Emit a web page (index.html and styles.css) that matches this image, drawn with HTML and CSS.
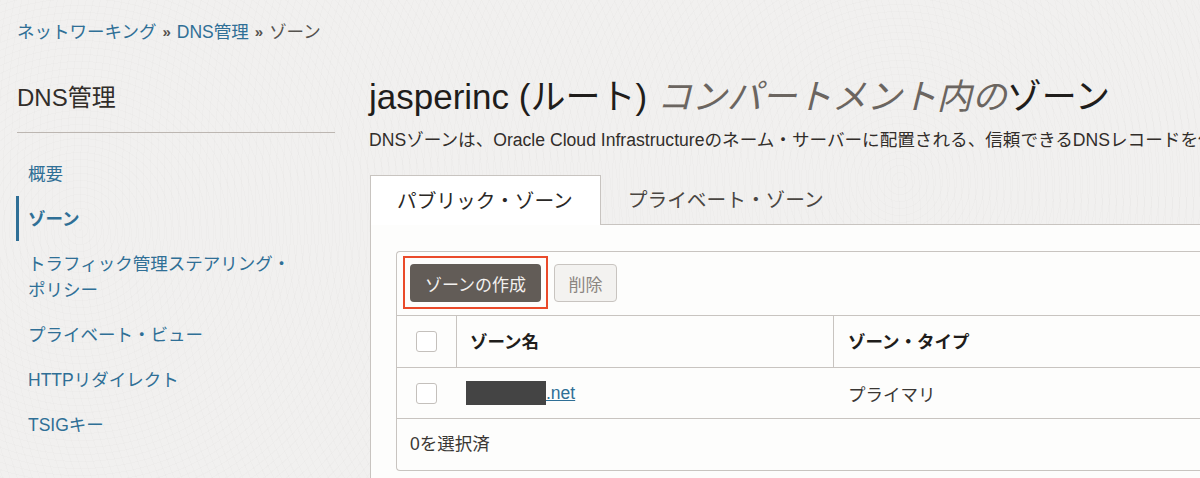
FILE: index.html
```html
<!DOCTYPE html>
<html lang="ja">
<head>
<meta charset="utf-8">
<title>ゾーン</title>
<link rel="stylesheet" href="styles.css">
</head>
<body>
<nav class="crumbs">
  <a href="#">ネットワーキング</a><span class="sep">»</span><a href="#">DNS管理</a><span class="sep">»</span><span>ゾーン</span>
</nav>
<div class="layout">
  <aside class="side">
    <h2 class="side-title">DNS管理</h2>
    <ul class="menu">
      <li class="item"><a href="#">概要</a></li>
      <li class="item active"><a href="#">ゾーン</a></li>
      <li class="item"><a href="#">トラフィック管理ステアリング・ポリシー</a></li>
      <li class="item"><a href="#">プライベート・ビュー</a></li>
      <li class="item"><a href="#">HTTPリダイレクト</a></li>
      <li class="item"><a href="#">TSIGキー</a></li>
    </ul>
  </aside>
  <main class="main">
    <h1 class="title">jasperinc (ルート) <em>コンパートメント内の</em>ゾーン</h1>
    <p class="desc">DNSゾーンは、Oracle Cloud Infrastructureのネーム・サーバーに配置される、信頼できるDNSレコードを保持します。</p>
    <div class="tabs">
      <div class="tab current">パブリック・ゾーン</div>
      <div class="tab">プライベート・ゾーン</div>
      <div class="tab-rest"></div>
    </div>
    <section class="panel">
      <div class="box">
        <div class="toolbar">
          <div class="highlight"><button class="btn primary">ゾーンの作成</button></div>
          <button class="btn plain">削除</button>
        </div>
        <div class="row head">
          <div class="cell check"><span class="box-check"></span></div>
          <div class="cell name">ゾーン名</div>
          <div class="cell type">ゾーン・タイプ</div>
        </div>
        <div class="row body-row">
          <div class="cell check"><span class="box-check"></span></div>
          <div class="cell name"><a class="zone" href="#"><span class="redact"></span>.net</a></div>
          <div class="cell type">プライマリ</div>
        </div>
        <div class="foot">0を選択済</div>
      </div>
    </section>
  </main>
</div>
</body>
</html>
```

FILE: styles.css
```css
* { box-sizing: border-box; }
html, body { margin: 0; height: 478px; overflow: hidden; }
body {
  width: 1200px;
  padding: 22px 0 0 17px;
  color: #2f2f2e;
  font-family: "Liberation Sans", "Noto Sans CJK JP", sans-serif;
  font-size: 17.5px;
  background-color: #f1f0ef;
  background-image:
    repeating-radial-gradient(circle at 80px 230px, rgba(120,115,110,.025) 0 1px, transparent 1px 7px),
    repeating-radial-gradient(circle at 900px 180px, rgba(120,115,110,.025) 0 1px, transparent 1px 7px);
}
a { color: #2f6f96; text-decoration: none; }

.crumbs { display: flex; align-items: center; height: 20px; font-size: 17.5px; line-height: 20px; color: #55524e; }
.sep { margin: 0 6px; font-weight: 700; font-size: 15px; color: #55524e; }

.layout { display: flex; margin-top: 34px; }
.side { flex: 0 0 318px; }
.side-title { margin: 0; height: 57px; padding-top: 6px; font-size: 24px; line-height: 32px; font-weight: 400; color: #312d2a; border-bottom: 1px solid #bcb6b1; }
.menu { list-style: none; margin: 18px 0 0; padding: 0; }
.item { padding: 10px 0 9px 9px; font-size: 17.5px; line-height: 26px; border-left: 3px solid transparent; margin-left: -1px; }
.item a { display: block; max-width: 270px; }
.active { border-left-color: #2f6f96; font-weight: 700; }

.main { flex: 0 0 auto; width: 831px; margin-left: 34px; }
.title { margin: 0; font-size: 35px; line-height: 42px; font-weight: 400; color: #1f1d1b; white-space: nowrap; }
.title em { color: #6b6560; font-style: italic; }
.desc { margin: 12px 0 0; height: 20px; font-size: 17.6px; line-height: 20px; white-space: nowrap; overflow: hidden; color: #312d2a; }

.tabs { display: flex; margin: 25px 0 0 1px; height: 50px; font-size: 19.7px; }
.tab { padding: 9px 27px 0; color: #4a4642; border-bottom: 1px solid #c8c4c0; }
.tab.current { padding: 9px 27px 0 26px; color: #2a2826; background: #fff; border: 1px solid #c8c4c0; border-bottom: 0; }
.tab-rest { flex: 1; border-bottom: 1px solid #c8c4c0; }

.panel { height: 254px; margin-left: 1px; padding: 26px 0 0 25px; background: #fdfdfc; border-left: 1px solid #c8c4c0; }
.box { height: 220px; border: 1px solid #c8c4c0; border-right: 0; border-radius: 4px 0 0 4px; }

.toolbar { display: flex; align-items: flex-start; gap: 6px; height: 63px; padding: 4px 0 0 6px; }
.highlight { padding: 6px 5px 5px; border: 2px solid #ea4a2a; }
.btn { display: block; height: 38px; border-radius: 4px; font: inherit; font-size: 17px; }
.primary { width: 131px; background: #625c57; color: #f3f1ef; border: 0; }
.plain { width: 63px; margin-top: 8px; background: #f3f2f0; color: #8a8580; border: 1px solid #c8c4c0; }

.row { display: flex; height: 52px; border-top: 1px solid #c8c4c0; }
.head { font-weight: 700; color: #1f1d1b; }
.cell { display: flex; align-items: center; font-size: 17.5px; }
.check { flex: 0 0 59px; justify-content: center; }
.name { flex: 0 0 377px; padding-left: 13px; }
.type { flex: 1; padding-left: 14px; color: #3a3734; }
.head .type { color: #1f1d1b; }
.head .name, .head .type { border-left: 1px solid #c8c4c0; padding-bottom: 2px; }
.body-row { height: 51px; }
.body-row .name { padding-left: 10px; }
.body-row .type { padding-left: 15px; }
.box-check { display: block; width: 21px; height: 21px; background: #fff; border: 1px solid #c4c0bc; border-radius: 3px; }
.zone { display: inline-flex; align-items: center; text-decoration: underline; }
.redact { display: block; width: 80px; height: 24px; background: #444; }
.foot { height: 51px; padding-left: 13px; font-size: 17.5px; line-height: 50px; color: #3a3734; border-top: 1px solid #c8c4c0; }
```
